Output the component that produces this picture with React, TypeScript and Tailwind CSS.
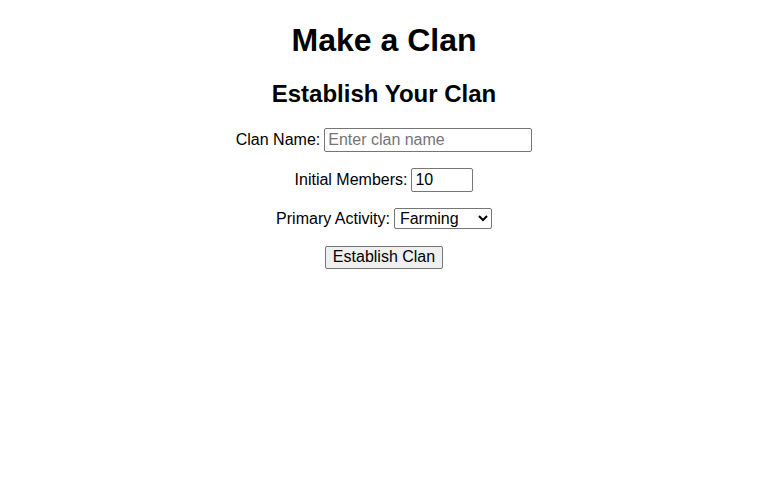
import React, { useState } from 'react';

const activities = ['Farming', 'Hunting', 'Fishing', 'Trading', 'Crafting'];

const App = () => {
  const [name, setName] = useState('');
  const [members, setMembers] = useState('10');
  const [activity, setActivity] = useState('Farming');

  return (
    <div className="min-h-screen bg-white text-black text-center font-['Liberation_Sans',Arial,sans-serif] text-[16px] pt-[22px]">
      <h1 className="text-[32px] font-bold leading-[37px] mb-[21px]">Make a Clan</h1>
      <h2 className="text-[24px] font-bold leading-[28px] mb-[20px]">Establish Your Clan</h2>
      <form onSubmit={(e) => e.preventDefault()}>
        <div className="mb-4 h-6 flex items-center justify-center gap-[4px]">
          <label htmlFor="clan-name">Clan Name:</label>
          <input
            id="clan-name"
            type="text"
            value={name}
            onChange={(e) => setName(e.target.value)}
            placeholder="Enter clan name"
            className="w-[208px] h-6 border border-[#767676] rounded-[2px] px-[3px] text-left placeholder:text-[#757575] outline-none"
          />
        </div>
        <div className="mb-4 h-6 flex items-center justify-center gap-[4px]">
          <label htmlFor="members">Initial Members:</label>
          <input
            id="members"
            type="number"
            value={members}
            onChange={(e) => setMembers(e.target.value)}
            className="w-[62px] h-6 border border-[#767676] rounded-[2px] px-[3px] text-left outline-none [appearance:textfield] [&::-webkit-inner-spin-button]:appearance-none"
          />
        </div>
        <div className="mb-4 h-[21px] flex items-center justify-center gap-[4px]">
          <label htmlFor="activity">Primary Activity:</label>
          <select
            id="activity"
            value={activity}
            onChange={(e) => setActivity(e.target.value)}
            className="w-[98px] h-[21px] border border-[#767676] rounded-[2px] bg-white pl-[1px] text-left"
          >
            {activities.map((a) => (
              <option key={a} value={a}>{a}</option>
            ))}
          </select>
        </div>
        <button
          type="submit"
          className="w-[118px] h-[23px] border border-[#767676] rounded-[2px] bg-[#efefef] leading-none"
        >
          Establish Clan
        </button>
      </form>
    </div>
  );
};

export default App;
